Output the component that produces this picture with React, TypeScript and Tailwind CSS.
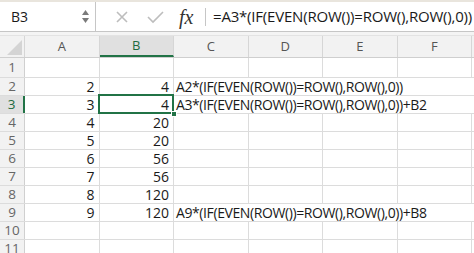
import React from 'react';

const cols = ['A', 'B', 'C', 'D', 'E', 'F'];
const colW = 74.5;

const rows: { a?: string; b?: string; c?: string }[] = [
  {},
  { a: '2', b: '4', c: 'A2*(IF(EVEN(ROW())=ROW(),ROW(),0))' },
  { a: '3', b: '4', c: 'A3*(IF(EVEN(ROW())=ROW(),ROW(),0))+B2' },
  { a: '4', b: '20' },
  { a: '5', b: '20' },
  { a: '6', b: '56' },
  { a: '7', b: '56' },
  { a: '8', b: '120' },
  { a: '9', b: '120', c: 'A9*(IF(EVEN(ROW())=ROW(),ROW(),0))+B8' },
  {},
  {},
];

const font = { fontFamily: '"Open Sans", "Liberation Sans", sans-serif' };

const App = () => {
  return (
    <div className="w-[474px] h-[253px] overflow-hidden bg-white text-[#1a1a1a]" style={font}>
      {/* Formula bar */}
      <div className="h-[32px] flex items-stretch border-t-2 border-t-[#e9e5dd] border-b border-b-[#c6c6c6] bg-white">
        <div className="w-[96px] shrink-0 flex items-center justify-between pl-[11px] pr-[6px] border-r border-[#c6c6c6]">
          <span className="text-[14px]">B3</span>
          <div className="flex flex-col items-center gap-[3px]">
            <svg width="7" height="5" viewBox="0 0 7 5"><path d="M3.5 0 L7 5 L0 5 Z" fill="#7a7a7a" /></svg>
            <svg width="7" height="5" viewBox="0 0 7 5"><path d="M0 0 L7 0 L3.5 5 Z" fill="#7a7a7a" /></svg>
          </div>
        </div>
        <div className="flex items-center pl-[19px] w-[109px] shrink-0">
          <svg width="14" height="14" viewBox="0 0 14 14">
            <path d="M2 2 L12 12 M12 2 L2 12" stroke="#bdbdbd" strokeWidth="1.6" fill="none" />
          </svg>
          <svg className="ml-[18px]" width="17" height="14" viewBox="0 0 17 14">
            <path d="M1 7 L6 12 L16 2" stroke="#bdbdbd" strokeWidth="1.6" fill="none" />
          </svg>
          <span
            className="ml-[15px] text-[20px] italic text-[#333] leading-none"
            style={{ fontFamily: '"Liberation Serif", serif' }}
          >
            fx
          </span>
        </div>
        <div className="flex items-center">
          <div className="w-px h-[18px] bg-[#c6c6c6]" />
        </div>
        <div className="flex items-center pl-[7px] whitespace-nowrap text-[15px] tracking-[-0.2px]">
          =A3*(IF(EVEN(ROW())=ROW(),ROW(),0))
        </div>
      </div>
      <div className="h-[3px] bg-[#f4f4f4]" />

      {/* Column headers */}
      <div className="flex h-[23px] bg-[#f2f2f2] border-b border-[#cfcfcf] border-t border-t-[#e3e3e3]">
        <div className="w-[25px] shrink-0 border-r border-[#d6d6d6] relative">
          <svg className="absolute right-[2px] bottom-[2px]" width="15" height="15" viewBox="0 0 15 15">
            <path d="M15 0 L15 15 L0 15 Z" fill="#d4d4d4" />
          </svg>
        </div>
        {cols.map((c) => (
          <div
            key={c}
            className={
              c === 'B'
                ? 'shrink-0 flex items-center justify-center text-[13px] text-[#1f6b3f] bg-[#e0e0e0] border-r border-[#d6d6d6] border-b-2 border-b-[#217346]'
                : 'shrink-0 flex items-center justify-center text-[13px] text-[#555] border-r border-[#d6d6d6]'
            }
            style={{ width: colW }}
          >
            {c}
          </div>
        ))}
        <div className="flex-1" />
      </div>

      {/* Grid */}
      {rows.map((r, i) => {
        const n = i + 1;
        const sel = n === 3;
        return (
          <div
            key={n}
            className={
              n === 1
                ? 'flex h-[20px] border-b border-[#dcdcdc] text-[14px] leading-none'
                : 'flex h-[18px] border-b border-[#dcdcdc] text-[14px] leading-none'
            }
          >
            <div
              className={
                sel
                  ? 'w-[25px] shrink-0 flex items-center justify-center text-[#1f6b3f] bg-[#e0e0e0] border-r-2 border-[#217346] text-[13.5px]'
                  : 'w-[25px] shrink-0 flex items-center justify-center text-[#666] bg-[#f2f2f2] border-r border-[#d0d0d0] text-[13.5px]'
              }
            >
              {n}
            </div>
            <div className="shrink-0 flex items-center justify-end pr-[4px] border-r border-[#dcdcdc]" style={{ width: colW }}>
              {r.a}
            </div>
            <div className="shrink-0 flex items-center justify-end pr-[4px] border-r border-[#dcdcdc] relative" style={{ width: colW }}>
              {r.b}
              {sel && (
                <>
                  <div className="absolute -left-[2px] -top-[2px] -right-[1px] -bottom-[1px] border-2 border-[#217346]" />
                  <div className="absolute -right-[4px] -bottom-[4px] w-[6px] h-[6px] bg-[#217346] border border-white z-10" />
                </>
              )}
            </div>
            {r.c ? (
              <div className="flex-1 flex items-center pl-[2px] whitespace-nowrap text-[14px] tracking-[-0.4px]">{r.c}</div>
            ) : (
              <>
                {cols.slice(2).map((c) => (
                  <div key={c} className="shrink-0 border-r border-[#dcdcdc]" style={{ width: colW }} />
                ))}
                <div className="flex-1" />
              </>
            )}
          </div>
        );
      })}
    </div>
  );
};

export default App;
